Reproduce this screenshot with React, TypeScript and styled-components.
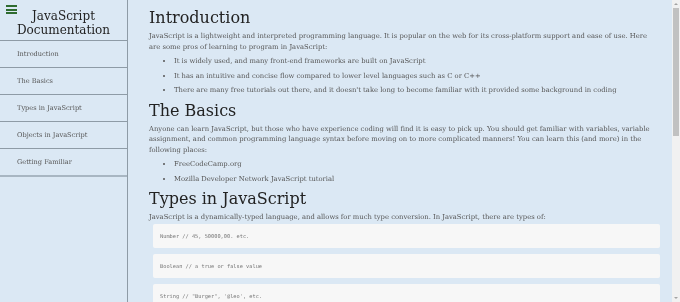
import React from 'react'
import styled, { createGlobalStyle } from 'styled-components'

const GlobalStyle = createGlobalStyle`
  html, body {
    margin: 0;
    padding: 0;
    height: 100%;
    background: #dbe8f4;
    font-family: "DejaVu Serif", "Liberation Serif", serif;
  }
  #root { height: 100%; }
`

const navItems = [
  'Introduction',
  'The Basics',
  'Types in JavaScript',
  'Objects in JavaScript',
  'Getting Familiar',
]

const types = [
  'Number // 45, 50000,00. etc.',
  'Boolean // a true or false value',
  'String // "Burger", \'@leo\', etc.',
  'Undefined // a variable with no value',
  'Null // an empty value',
]

export default function App() {
  return (
    <>
      <GlobalStyle />
      <Page>
        <Sidebar>
          <NavHeader>
            <Burger>
              <span />
              <span />
              <span />
            </Burger>
            <Title>JavaScript Documentation</Title>
          </NavHeader>
          <NavList>
            {navItems.map((item) => (
              <NavLink key={item} href={'#' + item.replace(/ /g, '_')}>
                {item}
              </NavLink>
            ))}
          </NavList>
        </Sidebar>
        <Main>
          <Section id="Introduction">
            <Heading>Introduction</Heading>
            <Text>
              JavaScript is a lightweight and interpreted programming language. It is popular on the web
              for its cross-platform support and ease of use. Here are some pros of learning to program in
              JavaScript:
            </Text>
            <List>
              <Item>It is widely used, and many front-end frameworks are built on JavaScript</Item>
              <Item>It has an intuitive and concise flow compared to lower level languages such as C or C++</Item>
              <Item>
                There are many free tutorials out there, and it doesn't take long to become familiar with it
                provided some background in coding
              </Item>
            </List>
          </Section>
          <Section id="The_Basics">
            <Heading>The Basics</Heading>
            <Text>
              Anyone can learn JavaScript, but those who have experience coding will find it is easy to pick
              up. You should get familiar with variables, variable assignment, and common programming
              language syntax before moving on to more complicated manners! You can learn this (and more) in
              the following places:
            </Text>
            <List>
              <Item>FreeCodeCamp.org</Item>
              <Item>Mozilla Developer Network JavaScript tutorial</Item>
            </List>
          </Section>
          <Section id="Types_in_JavaScript">
            <Heading>Types in JavaScript</Heading>
            <Text>
              JavaScript is a dynamically-typed language, and allows for much type conversion. In
              JavaScript, there are types of:
            </Text>
            {types.map((t) => (
              <Code key={t}>{t}</Code>
            ))}
          </Section>
          <Section id="Objects_in_JavaScript">
            <Heading>Objects in JavaScript</Heading>
            <Text>
              Objects are collections of key and value pairs. They can hold any type, including other
              objects and functions.
            </Text>
          </Section>
        </Main>
        <ScrollTrack>
          <ScrollArrow $up />
          <ScrollThumb />
          <ScrollArrow />
        </ScrollTrack>
      </Page>
    </>
  )
}

const Page = styled.div`
  display: flex;
  height: 100vh;
  color: #555;
  will-change: transform;
`

const Sidebar = styled.nav`
  width: 127px;
  flex-shrink: 0;
  border-right: 1px solid #8e9ba6;
  display: flex;
  flex-direction: column;
`

const NavHeader = styled.div`
  position: relative;
  height: 41px;
  padding-top: 9px;
  box-sizing: border-box;
  border-bottom: 1px solid #8e9ba6;
`

const Burger = styled.div`
  position: absolute;
  left: 6px;
  top: 5px;
  display: flex;
  flex-direction: column;
  gap: 1.5px;
  span {
    display: block;
    width: 11px;
    height: 2px;
    background: #2e6b2f;
  }
`

const Title = styled.h1`
  margin: 0;
  font-size: 12px;
  line-height: 14px;
  font-weight: normal;
  color: #222;
  text-align: center;
`

const NavList = styled.div`
  display: flex;
  flex-direction: column;
  border-bottom: 2px solid #a8b6c2;
`

const NavLink = styled.a`
  display: block;
  height: 26px;
  line-height: 26px;
  padding-left: 17px;
  font-size: 6.6px;
  color: #555;
  text-decoration: none;
  border-top: 1px solid #8e9ba6;
  &:first-child {
    border-top: none;
  }
`

const Main = styled.main`
  flex: 1;
  overflow-y: auto;
  padding: 7px 12px 40px 21px;
  scrollbar-width: none;
  &::-webkit-scrollbar {
    display: none;
  }
`

const ScrollTrack = styled.div`
  width: 8px;
  flex-shrink: 0;
  background: #f1f1f1;
  display: flex;
  flex-direction: column;
  align-items: center;
`

const ScrollThumb = styled.div`
  width: 6px;
  height: 128px;
  background: #c1c1c1;
  margin-bottom: auto;
`

const ScrollArrow = styled.div<{ $up?: boolean }>`
  width: 0;
  height: 0;
  margin: 3px 0;
  border-left: 2px solid transparent;
  border-right: 2px solid transparent;
  ${(p) => (p.$up ? 'border-bottom: 2px solid #a3a3a3;' : 'border-top: 2px solid #a3a3a3;')}
`

const Section = styled.section`
  display: flex;
  flex-direction: column;
`

const Heading = styled.h2`
  margin: 0 0 2px;
  font-size: 16px;
  line-height: 22px;
  font-weight: normal;
  color: #222;
`

const Text = styled.p`
  margin: 0;
  font-size: 6.8px;
  line-height: 10.5px;
`

const List = styled.ul`
  margin: 4px 0 0;
  padding-left: 25px;
`

const Item = styled.li`
  font-size: 6.8px;
  line-height: 10.5px;
  margin-bottom: 4px;
`

const Code = styled.pre`
  margin: 3px 0 3px 4px;
  height: 24px;
  padding: 0 7px;
  box-sizing: border-box;
  display: flex;
  align-items: center;
  background: #f7f7f7;
  border-radius: 2px;
  font-family: "DejaVu Sans Mono", "Liberation Mono", monospace;
  font-size: 5.3px;
  color: #777;
  &:first-of-type {
    margin-top: 1px;
  }
`
